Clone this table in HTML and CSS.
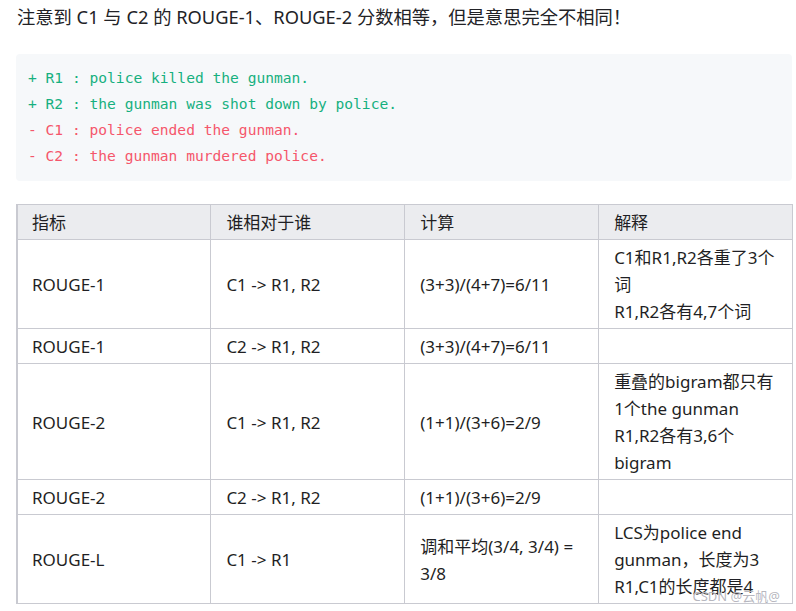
FILE: index.html
```html
<!DOCTYPE html>
<html lang="zh-CN">
<head>
<meta charset="utf-8">
<link rel="stylesheet" href="styles.css">
</head>
<body>
<div class="article">
  <p class="lead">注意到 C1 与 C2 的 ROUGE-1、ROUGE-2 分数相等，但是意思完全不相同！</p>
  <pre class="code"><code><span class="add">+ R1 : police killed the gunman.</span>
<span class="add">+ R2 : the gunman was shot down by police.</span>
<span class="del">- C1 : police ended the gunman.</span>
<span class="del">- C2 : the gunman murdered police.</span></code></pre>
  <table class="metrics">
    <thead>
      <tr><th>指标</th><th>谁相对于谁</th><th>计算</th><th>解释</th></tr>
    </thead>
    <tbody>
      <tr><td>ROUGE-1</td><td>C1 -&gt; R1, R2</td><td>(3+3)/(4+7)=6/11</td><td>C1和R1,R2各重了3个词<br>R1,R2各有4,7个词</td></tr>
      <tr><td>ROUGE-1</td><td>C2 -&gt; R1, R2</td><td>(3+3)/(4+7)=6/11</td><td></td></tr>
      <tr><td>ROUGE-2</td><td>C1 -&gt; R1, R2</td><td>(1+1)/(3+6)=2/9</td><td>重叠的bigram都只有1个the gunman<br>R1,R2各有3,6个bigram</td></tr>
      <tr><td>ROUGE-2</td><td>C2 -&gt; R1, R2</td><td>(1+1)/(3+6)=2/9</td><td></td></tr>
      <tr><td>ROUGE-L</td><td>C1 -&gt; R1</td><td>调和平均(3/4, 3/4) = 3/8</td><td>LCS为police end gunman，长度为3<br>R1,C1的长度都是4</td></tr>
    </tbody>
  </table>
  <div class="watermark">CSDN @云帆@</div>
</div>
</body>
</html>
```

FILE: styles.css
```css
html, body {
  margin: 0;
  padding: 0;
  background: #ffffff;
}

.article {
  position: relative;
  width: 777px;
  padding-left: 16px;
  font-family: "Noto Sans", "Noto Sans CJK SC", sans-serif;
  color: #222226;
}

.lead {
  margin: 0;
  padding-left: 1px;
  font-size: 18.3px;
  line-height: 34px;
  color: #222226;
}

.code {
  margin: 20px 0 0;
  width: 776px;
  box-sizing: border-box;
  padding: 11px 12px 12px;
  background: #f6f8fa;
  border-radius: 4px;
  font-family: "DejaVu Sans Mono", monospace;
  font-size: 14.6px;
  line-height: 26px;
}

.add { color: #16b07f; }
.del { color: #f5566b; }

.metrics {
  margin-top: 23px;
  width: 777px;
  table-layout: fixed;
  border-collapse: collapse;
  font-size: 17px;
  line-height: 27px;
  color: #1f1f24;
}

.metrics th,
.metrics td {
  border: 1px solid #c9cad1;
  padding: 4px 15px 3px;
  text-align: left;
  vertical-align: middle;
  font-weight: normal;
}

.metrics th {
  background: #ebecef;
}

.metrics tr > :first-child {
  border-left: 2px solid #c9cad1;
  padding-left: 14px;
}

.watermark {
  position: absolute;
  right: 13px;
  top: 587px;
  font-size: 13px;
  line-height: 18px;
  color: rgba(160, 160, 170, 0.75);
  text-shadow: 0 0 1px #fff;
}
```
